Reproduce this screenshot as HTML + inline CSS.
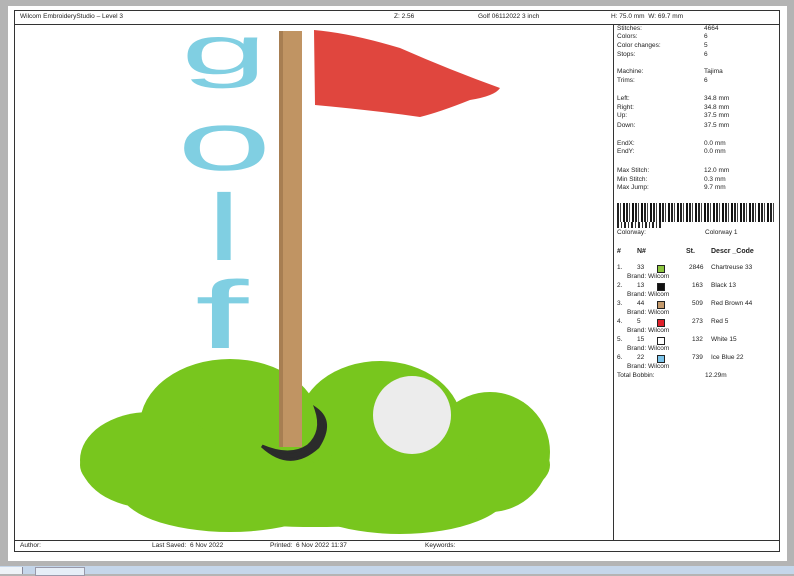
<!DOCTYPE html>
<html><head><meta charset="utf-8"><style>
*{margin:0;padding:0}
body{width:794px;height:574px;background:#b4b4b4;position:relative;overflow:hidden;font-family:"Liberation Sans",sans-serif;font-size:6.5px;color:#222}
.t{position:absolute;white-space:nowrap;line-height:8px}
.L{position:absolute;font-family:"Liberation Sans",sans-serif;color:#80cfe2;transform-origin:0 0;white-space:nowrap}
</style></head><body>
<div style="position:absolute;left:8px;top:6px;width:779px;height:555px;background:#fff"></div>
<div style="position:absolute;left:14px;top:10px;width:766px;height:542px;border:1px solid #333;box-sizing:border-box"></div>
<div style="position:absolute;left:14px;top:24px;width:766px;height:1px;background:#333"></div>
<div style="position:absolute;left:14px;top:540px;width:766px;height:1px;background:#333"></div>
<div style="position:absolute;left:613px;top:24px;width:1px;height:516px;background:#333"></div>
<div style="position:absolute;left:0;top:566px;width:794px;height:8px;background:#c5d6ea"></div>
<div style="position:absolute;left:0;top:567px;width:22px;height:7px;background:#eef3f8;border-right:1px solid #889"></div>
<div style="position:absolute;left:35px;top:567px;width:48px;height:7px;background:#e6eef7;border:1px solid #99a"></div>

<div class="t" style="left:20px;top:13px">Wilcom EmbroideryStudio – Level 3</div>
<div class="t" style="left:394px;top:13px">Z: 2.56</div>
<div class="t" style="left:478px;top:13px">Golf 06112022 3 inch</div>
<div class="t" style="left:611px;top:13px">H: 75.0 mm &nbsp;W: 69.7 mm</div>

<div class="t" style="left:20px;top:542px">Author:</div>
<div class="t" style="left:152px;top:542px">Last Saved: &nbsp;6 Nov 2022</div>
<div class="t" style="left:270px;top:542px">Printed: &nbsp;6 Nov 2022 11:37</div>
<div class="t" style="left:425px;top:542px">Keywords:</div>

<svg width="794" height="574" style="position:absolute;left:0;top:0">
<g fill="#78c61e">
<ellipse cx="315" cy="465" rx="235" ry="62"/>
<ellipse cx="230" cy="425" rx="90" ry="66"/>
<ellipse cx="380" cy="425" rx="82" ry="64"/>
<ellipse cx="150" cy="460" rx="70" ry="48"/>
<ellipse cx="490" cy="452" rx="60" ry="60"/>
<ellipse cx="230" cy="490" rx="110" ry="42"/>
<ellipse cx="400" cy="490" rx="110" ry="44"/>
</g>
<rect x="279" y="31" width="23" height="416" fill="#c09463"/>
<rect x="279" y="31" width="4" height="416" fill="#a77e52"/>
<path d="M262 446 Q290 472 318 447 Q334 422 316 409 Q324 432 308 446 Q290 458 262 446Z" fill="#2b2b2b" stroke="#2b2b2b" stroke-width="3"/>
<circle cx="412" cy="415" r="39" fill="#ececec"/>
<path d="M314 30 Q350 33 400 48 Q450 70 500 88 Q495 96 470 100 Q440 112 420 117 Q370 110 315 105Z" fill="#e0463e"/>
</svg>
<div class="L" style="left:181px;top:16px;font-size:69px;line-height:69px;transform:scaleX(2.25)">g</div>
<div class="L" style="left:177px;top:100px;font-size:83px;line-height:83px;transform:scaleX(2.05)">o</div>
<div class="L" style="left:207px;top:181px;font-size:94px;line-height:94px;transform:scaleX(1.62)">l</div>
<div class="L" style="left:195px;top:268px;font-size:96px;line-height:96px;transform:scaleX(2.0)">f</div>

<div style="position:absolute;left:617px;top:203px;width:157px;height:19px;background:repeating-linear-gradient(90deg,#222 0 2px,#fff 2px 3px,#444 3px 4px,#fff 4px 6px,#111 6px 8px,#fff 8px 9px)"></div>
<div style="position:absolute;left:617px;top:222px;width:44px;height:6px;background:repeating-linear-gradient(90deg,#222 0 2px,#fff 2px 4px,#333 4px 5px,#fff 5px 7px)"></div>

<div class="t" style="left:617px;top:25px">Stitches:</div><div class="t" style="left:704px;top:25px">4664</div>
<div class="t" style="left:617px;top:33px">Colors:</div><div class="t" style="left:704px;top:33px">6</div>
<div class="t" style="left:617px;top:42px">Color changes:</div><div class="t" style="left:704px;top:42px">5</div>
<div class="t" style="left:617px;top:51px">Stops:</div><div class="t" style="left:704px;top:51px">6</div>
<div class="t" style="left:617px;top:68px">Machine:</div><div class="t" style="left:704px;top:68px">Tajima</div>
<div class="t" style="left:617px;top:77px">Trims:</div><div class="t" style="left:704px;top:77px">6</div>
<div class="t" style="left:617px;top:95px">Left:</div><div class="t" style="left:704px;top:95px">34.8 mm</div>
<div class="t" style="left:617px;top:104px">Right:</div><div class="t" style="left:704px;top:104px">34.8 mm</div>
<div class="t" style="left:617px;top:112px">Up:</div><div class="t" style="left:704px;top:112px">37.5 mm</div>
<div class="t" style="left:617px;top:122px">Down:</div><div class="t" style="left:704px;top:122px">37.5 mm</div>
<div class="t" style="left:617px;top:140px">EndX:</div><div class="t" style="left:704px;top:140px">0.0 mm</div>
<div class="t" style="left:617px;top:148px">EndY:</div><div class="t" style="left:704px;top:148px">0.0 mm</div>
<div class="t" style="left:617px;top:167px">Max Stitch:</div><div class="t" style="left:704px;top:167px">12.0 mm</div>
<div class="t" style="left:617px;top:176px">Min Stitch:</div><div class="t" style="left:704px;top:176px">0.3 mm</div>
<div class="t" style="left:617px;top:184px">Max Jump:</div><div class="t" style="left:704px;top:184px">9.7 mm</div>

<div class="t" style="left:617px;top:229px">Colorway:</div><div class="t" style="left:705px;top:229px">Colorway 1</div>
<div class="t" style="left:617px;top:248px;font-weight:bold;font-size:7px">#</div>
<div class="t" style="left:637px;top:248px;font-weight:bold;font-size:7px">N#</div>
<div class="t" style="left:686px;top:248px;font-weight:bold;font-size:7px">St.</div>
<div class="t" style="left:711px;top:248px;font-weight:bold;font-size:7px">Descr _Code</div>

<div class="t" style="left:617px;top:264px">1.</div><div class="t" style="left:637px;top:264px">33</div><div style="position:absolute;left:657px;top:265px;width:6px;height:6px;background:#8dc63f;border:1px solid #222"></div><div class="t" style="left:689px;top:264px">2846</div><div class="t" style="left:711px;top:264px">Chartreuse 33</div>
<div class="t" style="left:627px;top:273px">Brand: Wilcom</div>
<div class="t" style="left:617px;top:282px">2.</div><div class="t" style="left:637px;top:282px">13</div><div style="position:absolute;left:657px;top:283px;width:6px;height:6px;background:#111;border:1px solid #222"></div><div class="t" style="left:692px;top:282px">163</div><div class="t" style="left:711px;top:282px">Black 13</div>
<div class="t" style="left:627px;top:291px">Brand: Wilcom</div>
<div class="t" style="left:617px;top:300px">3.</div><div class="t" style="left:637px;top:300px">44</div><div style="position:absolute;left:657px;top:301px;width:6px;height:6px;background:#c49a6c;border:1px solid #222"></div><div class="t" style="left:692px;top:300px">509</div><div class="t" style="left:711px;top:300px">Red Brown 44</div>
<div class="t" style="left:627px;top:309px">Brand: Wilcom</div>
<div class="t" style="left:617px;top:318px">4.</div><div class="t" style="left:637px;top:318px">5</div><div style="position:absolute;left:657px;top:319px;width:6px;height:6px;background:#e0202a;border:1px solid #222"></div><div class="t" style="left:692px;top:318px">273</div><div class="t" style="left:711px;top:318px">Red 5</div>
<div class="t" style="left:627px;top:327px">Brand: Wilcom</div>
<div class="t" style="left:617px;top:336px">5.</div><div class="t" style="left:637px;top:336px">15</div><div style="position:absolute;left:657px;top:337px;width:6px;height:6px;background:#fff;border:1px solid #222"></div><div class="t" style="left:692px;top:336px">132</div><div class="t" style="left:711px;top:336px">White 15</div>
<div class="t" style="left:627px;top:345px">Brand: Wilcom</div>
<div class="t" style="left:617px;top:354px">6.</div><div class="t" style="left:637px;top:354px">22</div><div style="position:absolute;left:657px;top:355px;width:6px;height:6px;background:#7cc4ea;border:1px solid #222"></div><div class="t" style="left:692px;top:354px">739</div><div class="t" style="left:711px;top:354px">Ice Blue 22</div>
<div class="t" style="left:627px;top:363px">Brand: Wilcom</div>
<div class="t" style="left:617px;top:372px">Total Bobbin:</div><div class="t" style="left:705px;top:372px">12.29m</div>
</body></html>
